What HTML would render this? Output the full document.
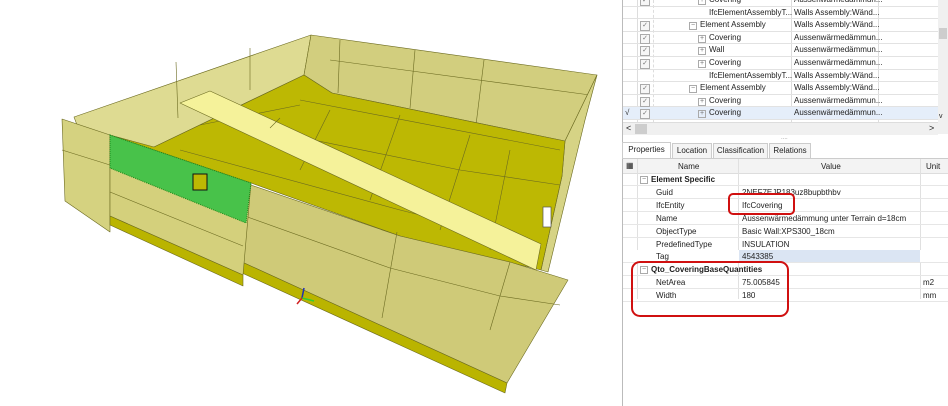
<!DOCTYPE html>
<html><head><meta charset="utf-8"><style>
body{margin:0;width:948px;height:406px;overflow:hidden;background:#fff;font-family:"Liberation Sans",sans-serif;font-size:8px;color:#222;position:relative}
.a{position:absolute}
.row{position:absolute;left:623px;width:315px;height:12.6px;border-bottom:1px solid #e2e2e2;box-sizing:border-box}
.row span{position:absolute;top:1px;white-space:nowrap}
.cb{position:absolute;left:17px;top:2px;width:8px;height:8px;border:1px solid #aaa;background:#f6f6f6;font-size:7px;line-height:8px;text-align:center;color:#777}
.pl{position:absolute;width:6px;height:6px;border:1px solid #aaa;font-size:7px;line-height:6px;text-align:center;color:#777;top:3px}
.pr{position:absolute;left:623px;width:325px;height:13px;border-bottom:1px solid #e6e6e6;box-sizing:border-box}
.pr span{position:absolute;top:2px;white-space:nowrap}
.tab{position:absolute;top:143px;height:15px;border:1px solid #ccc;border-bottom:none;box-sizing:border-box;text-align:center;line-height:14px;background:#f4f4f4}
</style></head><body>
<svg class="a" style="left:0;top:0" width="620" height="406" viewBox="0 0 620 406">
<g stroke="#6b6a20" stroke-width="0.6" stroke-linejoin="round">
<polygon points="74,117 311,35 304,75 154,147 90,160" fill="#dedb92"/>
<polyline points="176,62 178,118" fill="none"/>
<polyline points="250,48 250,90" fill="none"/>
<polygon points="311,35 597,75 565,141 332,93 304,75" fill="#d2ce7e"/>
<polyline points="340,40 338,93" fill="none"/>
<polyline points="415,50 410,108" fill="none"/>
<polyline points="484,60 476,125" fill="none"/>
<polyline points="330,60 590,95" fill="none"/>
<polygon points="597,75 565,141 562,176 541,270 548,272 585,120" fill="#d6d385"/>
<polygon points="110,135 154,147 304,75 332,93 565,141 562,176 541,270 400,236 251,183" fill="#bdb803"/>
<polyline points="180,150 400,210 540,245" fill="none"/>
<polyline points="240,125 460,170 560,185" fill="none"/>
<polyline points="300,100 560,150" fill="none"/>
<polyline points="330,110 300,170" fill="none"/>
<polyline points="400,115 370,200" fill="none"/>
<polyline points="470,135 440,230" fill="none"/>
<polyline points="510,150 490,250" fill="none"/>
<polyline points="200,125 300,105" fill="none"/>
<polygon points="180,103 210,91 541,244 536,270" fill="#f5f29a"/>
<polyline points="270,128 280,118" fill="none"/>
<polygon points="62,119 110,135 110,232 65,201" fill="#d5d280"/>
<polyline points="62,150 110,165" fill="none"/>
<polygon points="245,183 400,236 510,262 568,280 507,383 242,262" fill="#cfca78"/>
<polyline points="242,215 390,268 500,296 560,305" fill="none"/>
<polyline points="397,232 382,318" fill="none"/>
<polyline points="510,262 490,330" fill="none"/>
<polygon points="242,262 507,383 505,393 242,273" fill="#bab400"/>
<polygon points="110,135 251,183 243,275 110,216" fill="#d4d07c"/>
<polyline points="110,192 243,246" fill="none"/>
<polygon points="110,216 243,275 243,286 110,225" fill="#bab400"/>
</g>
<polygon points="110,135 251,183 246,223 110,168" fill="#48c24a" stroke="#1a8a1a" stroke-width="1" stroke-dasharray="1,1"/>
<rect x="193" y="174" width="14" height="16" fill="#bdb803" stroke="#111" stroke-width="1"/>
<rect x="543" y="207" width="8" height="20" fill="#fff" stroke="#555" stroke-width="0.7"/>
<line x1="302" y1="298" x2="304" y2="288" stroke="#2230b0" stroke-width="1.5"/>
<line x1="302" y1="298" x2="314" y2="301" stroke="#33cc33" stroke-width="1.5"/>
<line x1="302" y1="298" x2="297" y2="304" stroke="#d02020" stroke-width="1.5"/>
</svg>

<div class="a" style="left:622px;top:0;width:1px;height:406px;background:#bbb"></div>
<div class="a" style="left:637px;top:0;width:1px;height:122px;background:#ddd"></div>
<div class="a" style="left:653px;top:0;width:1px;height:122px;border-left:1px dashed #ddd"></div>
<div class="a" style="left:791px;top:0;width:1px;height:122px;background:#ddd"></div>
<div class="a" style="left:878px;top:0;width:1px;height:122px;background:#ddd"></div>

<div class="row" style="top:-6px"><div class="cb">✓</div><div class="pl" style="left:75px">+</div><span style="left:86px">Covering</span><span style="left:171px">Aussenwärmedämmun...</span></div>
<div class="row" style="top:6.6px"><span style="left:86px">IfcElementAssemblyT...</span><span style="left:171px">Walls Assembly:Wänd...</span></div>
<div class="row" style="top:19.2px"><div class="cb">✓</div><div class="pl" style="left:66px">−</div><span style="left:77px">Element Assembly</span><span style="left:171px">Walls Assembly:Wänd...</span></div>
<div class="row" style="top:31.8px"><div class="cb">✓</div><div class="pl" style="left:75px">+</div><span style="left:86px">Covering</span><span style="left:171px">Aussenwärmedämmun...</span></div>
<div class="row" style="top:44.4px"><div class="cb">✓</div><div class="pl" style="left:75px">+</div><span style="left:86px">Wall</span><span style="left:171px">Aussenwärmedämmun...</span></div>
<div class="row" style="top:57px"><div class="cb">✓</div><div class="pl" style="left:75px">+</div><span style="left:86px">Covering</span><span style="left:171px">Aussenwärmedämmun...</span></div>
<div class="row" style="top:69.6px"><span style="left:86px">IfcElementAssemblyT...</span><span style="left:171px">Walls Assembly:Wänd...</span></div>
<div class="row" style="top:82.2px"><div class="cb">✓</div><div class="pl" style="left:66px">−</div><span style="left:77px">Element Assembly</span><span style="left:171px">Walls Assembly:Wänd...</span></div>
<div class="row" style="top:94.8px"><div class="cb">✓</div><div class="pl" style="left:75px">+</div><span style="left:86px">Covering</span><span style="left:171px">Aussenwärmedämmun...</span></div>
<div class="row" style="top:107.4px;background:#e5eefa"><span style="left:2px">√</span><div class="cb">✓</div><div class="pl" style="left:75px">+</div><span style="left:86px">Covering</span><span style="left:171px">Aussenwärmedämmun...</span></div>
<div class="a" style="left:623px;top:122px;width:315px;height:12px;background:#f0f0f0;border-top:1px solid #ddd"><span class="a" style="left:3px;top:0;font-size:9px">&lt;</span><div class="a" style="left:12px;top:1px;width:12px;height:10px;background:#cdcdcd"></div><span class="a" style="left:306px;top:0;font-size:9px">&gt;</span></div>
<div class="a" style="left:938px;top:0;width:10px;height:134px;background:#f0f0f0"><div class="a" style="left:1px;top:28px;width:8px;height:11px;background:#cdcdcd"></div><span class="a" style="left:1px;top:113px;font-size:7px">v</span></div>
<div class="a" style="left:781px;top:135px;font-size:6px;color:#999">....</div>

<div class="tab" style="left:622px;width:49px;background:#fff;top:142px;height:17px">Properties</div>
<div class="tab" style="left:672px;width:40px">Location</div>
<div class="tab" style="left:713px;width:55px">Classification</div>
<div class="tab" style="left:769px;width:42px">Relations</div>
<div class="a" style="left:622px;top:158px;width:326px;height:1px;background:#ccc"></div>
<div class="a" style="left:623px;top:159px;width:325px;height:14px;background:#f3f3f3;border-bottom:1px solid #ddd"></div>
<span class="a" style="left:626px;top:161px;font-size:8px">▦</span>
<span class="a" style="left:678px;top:162px">Name</span>
<span class="a" style="left:821px;top:162px">Value</span>
<span class="a" style="left:926px;top:162px">Unit</span>
<div class="a" style="left:637px;top:159px;width:1px;height:140px;background:#e0e0e0"></div>
<div class="a" style="left:738px;top:159px;width:1px;height:140px;background:#e0e0e0"></div>
<div class="a" style="left:920px;top:159px;width:1px;height:140px;background:#e0e0e0"></div>

<div class="pr" style="top:173px"><div class="pl" style="left:17px">−</div><span style="left:28px;font-weight:bold">Element Specific</span></div>
<div class="pr" style="top:186px"><span style="left:33px">Guid</span><span style="left:119px">2NEF7EJP183uz8bupbthbv</span></div>
<div class="pr" style="top:199px"><span style="left:33px">IfcEntity</span><span style="left:119px">IfcCovering</span></div>
<div class="pr" style="top:212px"><span style="left:33px">Name</span><span style="left:119px">Aussenwärmedämmung unter Terrain d=18cm</span></div>
<div class="pr" style="top:225px"><span style="left:33px">ObjectType</span><span style="left:119px">Basic Wall:XPS300_18cm</span></div>
<div class="pr" style="top:238px"><span style="left:33px">PredefinedType</span><span style="left:119px">INSULATION</span></div>
<div class="pr" style="top:250px;background:linear-gradient(to right,#fff 116px,#dbe5f3 116px,#dbe5f3 297px,#fff 297px)"><span style="left:33px">Tag</span><span style="left:119px">4543385</span></div>
<div class="pr" style="top:263px"><div class="pl" style="left:17px">−</div><span style="left:28px;font-weight:bold">Qto_CoveringBaseQuantities</span></div>
<div class="pr" style="top:276px"><span style="left:33px">NetArea</span><span style="left:119px">75.005845</span><span style="left:300px">m2</span></div>
<div class="pr" style="top:289px"><span style="left:33px">Width</span><span style="left:119px">180</span><span style="left:300px">mm</span></div>

<div class="a" style="left:728px;top:193px;width:63px;height:18px;border:2px solid #d01010;border-radius:5px"></div>
<div class="a" style="left:631px;top:261px;width:154px;height:52px;border:2px solid #d01010;border-radius:9px"></div>
</body></html>
